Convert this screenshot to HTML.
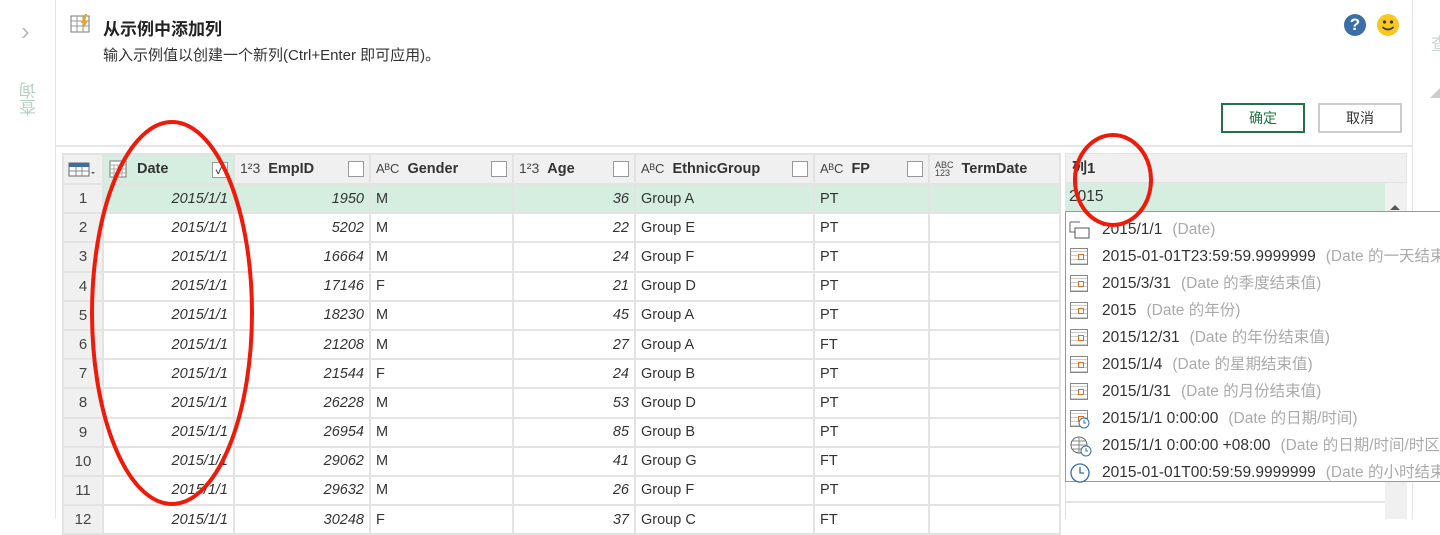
<!DOCTYPE html>
<html><head><meta charset="utf-8">
<style>
*{box-sizing:border-box;margin:0;padding:0}
body{width:1440px;height:519px;overflow:hidden;background:#fff;font-family:"Liberation Sans","Noto Sans CJK SC",sans-serif;color:#333;position:relative}
.abs{position:absolute}
#side{left:0;top:0;width:56px;height:519px;background:#fff;border-right:1px solid #e6e6e6}
#rside{left:1412px;top:0;width:28px;height:519px;border-left:1px solid #e6e6e6;background:#fff}
table{border-collapse:collapse;table-layout:fixed;position:absolute;left:62px;top:153px;font-size:14.5px}
td,th{border:2px solid #e3e3e3;height:29.2px;padding:0 5px;white-space:nowrap;overflow:hidden}
th{background:#f0f0f0;font-weight:bold;text-align:left;height:29px;line-height:27px;color:#333;vertical-align:middle}
td.n{background:#f0f0f0;text-align:center;color:#444;font-size:15px}
td.r{text-align:right;font-style:italic}
tr.sel td{background:#d5eee0}
tr.sel td.n{background:#f0f0f0}
.cb{display:inline-block;width:16px;height:16px;border:1px solid #999;background:#fff;float:right;margin-top:6px}
.ti{font-weight:normal;color:#444;font-size:12px;margin-right:8px}
.dd div{height:27px;line-height:27px;font-size:15.5px;color:#333;padding-left:36px;position:relative;white-space:nowrap}
.dd span{color:#aaa;margin-left:10px}
.ic{position:absolute;left:4px;top:5px;width:18px;height:17px;border:1px solid #888;background:repeating-linear-gradient(0deg,#ccc 0 1px,#fff 1px 4px),#fff}
.ic:after{content:"";position:absolute;right:3px;top:5px;width:4px;height:4px;border:1px solid #e07020;background:#fff}
</style></head><body>
<div class="abs" id="side">
 <div class="abs" style="left:21px;top:16px;font-size:26px;color:#bbb">&#8250;</div>
 <div class="abs" style="left:17px;top:82px;font-size:17px;color:#b8d0c4;writing-mode:vertical-rl;transform:rotate(180deg)">查询</div>
</div>
<div class="abs" id="rside">
 <div class="abs" style="left:18px;top:30px;font-size:17px;color:#c5d8cc">查</div>
 <div class="abs" style="left:17px;top:88px;width:0;height:0;border-left:10px solid transparent;border-bottom:10px solid #ccc"></div>
</div>

<svg class="abs" style="left:70px;top:14px" width="22" height="20"><rect x="1" y="2" width="18" height="16" fill="#fff" stroke="#777"/><path d="M1 7h18M1 12h18M7 2v16M13 2v16" stroke="#999"/><path d="M15 0l-4 9h3l-2 7 6-9h-3l2-7z" fill="#f0a020"/></svg>
<div class="abs" style="left:103px;top:15px;font-size:17px;font-weight:bold;color:#222">从示例中添加列</div>
<div class="abs" style="left:103px;top:44px;font-size:15px;color:#333">输入示例值以创建一个新列(Ctrl+Enter 即可应用)。</div>
<div class="abs" style="left:1344px;top:14px;width:22px;height:22px;border-radius:50%;background:#3a6ea8;color:#fff;font-weight:bold;font-size:17px;text-align:center;line-height:22px">?</div>
<svg class="abs" style="left:1376px;top:13px" width="24" height="24"><circle cx="12" cy="12" r="11" fill="#f8c820"/><circle cx="8.5" cy="9" r="1.6" fill="#333"/><circle cx="15.5" cy="9" r="1.6" fill="#333"/><path d="M6.5 14q5.5 5 11 0" stroke="#333" stroke-width="1.6" fill="none"/></svg>
<div class="abs" style="left:1221px;top:103px;width:84px;height:30px;border:2px solid #217346;text-align:center;line-height:26px;font-size:14px;color:#217346">确定</div>
<div class="abs" style="left:1318px;top:103px;width:84px;height:30px;border:2px solid #ccc;text-align:center;line-height:26px;font-size:14px;color:#333">取消</div>
<div class="abs" style="left:56px;top:145px;width:1356px;height:2px;background:#e6e6e6"></div>

<table>
<colgroup><col style="width:40px"><col style="width:131px"><col style="width:136px"><col style="width:143px"><col style="width:122px"><col style="width:179px"><col style="width:115px"><col style="width:131px"></colgroup>
<tr><th style="padding:0 4px"><svg width="28" height="16" style="vertical-align:middle"><rect x="1" y="2" width="20" height="13" fill="#fff" stroke="#666"/><rect x="1" y="2" width="20" height="4" fill="#3a6ea8"/><path d="M1 10h20M8 6v9M14 6v9" stroke="#888"/><path d="M23 11l2 2 2-2z" fill="#555"/></svg></th>
<th style="background:#d5eee0"><svg width="18" height="18" style="vertical-align:middle;margin-right:10px"><rect x="1" y="1" width="16" height="16" fill="#fff" stroke="#777"/><path d="M1 5h16M1 9h16M1 13h16M5 5v12M9 5v12M13 5v12" stroke="#aaa"/></svg>Date<span class="cb" style="text-align:center;line-height:13px;font-size:13px;font-weight:normal">✓</span></th>
<th><span class="ti" style="font-size:14px">1²3</span>EmpID<span class="cb"></span></th>
<th><span class="ti" style="font-size:13px">AᴮC</span>Gender<span class="cb"></span></th>
<th><span class="ti" style="font-size:14px">1²3</span>Age<span class="cb"></span></th>
<th><span class="ti" style="font-size:13px">AᴮC</span>EthnicGroup<span class="cb"></span></th>
<th><span class="ti" style="font-size:13px">AᴮC</span>FP<span class="cb"></span></th>
<th><span class="ti" style="font-size:9px;line-height:8px;display:inline-block;vertical-align:middle">ABC<br>123</span>TermDate</th></tr>
<tr class="sel"><td class="n">1</td><td class="r">2015/1/1</td><td class="r">1950</td><td>M</td><td class="r">36</td><td>Group A</td><td>PT</td><td></td></tr>
<tr><td class="n">2</td><td class="r">2015/1/1</td><td class="r">5202</td><td>M</td><td class="r">22</td><td>Group E</td><td>PT</td><td></td></tr>
<tr><td class="n">3</td><td class="r">2015/1/1</td><td class="r">16664</td><td>M</td><td class="r">24</td><td>Group F</td><td>PT</td><td></td></tr>
<tr><td class="n">4</td><td class="r">2015/1/1</td><td class="r">17146</td><td>F</td><td class="r">21</td><td>Group D</td><td>PT</td><td></td></tr>
<tr><td class="n">5</td><td class="r">2015/1/1</td><td class="r">18230</td><td>M</td><td class="r">45</td><td>Group A</td><td>PT</td><td></td></tr>
<tr><td class="n">6</td><td class="r">2015/1/1</td><td class="r">21208</td><td>M</td><td class="r">27</td><td>Group A</td><td>FT</td><td></td></tr>
<tr><td class="n">7</td><td class="r">2015/1/1</td><td class="r">21544</td><td>F</td><td class="r">24</td><td>Group B</td><td>PT</td><td></td></tr>
<tr><td class="n">8</td><td class="r">2015/1/1</td><td class="r">26228</td><td>M</td><td class="r">53</td><td>Group D</td><td>PT</td><td></td></tr>
<tr><td class="n">9</td><td class="r">2015/1/1</td><td class="r">26954</td><td>M</td><td class="r">85</td><td>Group B</td><td>PT</td><td></td></tr>
<tr><td class="n">10</td><td class="r">2015/1/1</td><td class="r">29062</td><td>M</td><td class="r">41</td><td>Group G</td><td>FT</td><td></td></tr>
<tr><td class="n">11</td><td class="r">2015/1/1</td><td class="r">29632</td><td>M</td><td class="r">26</td><td>Group F</td><td>PT</td><td></td></tr>
<tr><td class="n">12</td><td class="r">2015/1/1</td><td class="r">30248</td><td>F</td><td class="r">37</td><td>Group C</td><td>FT</td><td></td></tr>
</table>

<div class="abs" style="left:1065px;top:153px;width:342px;height:30px;background:#f0f0f0;border:1px solid #e3e3e3;font-weight:bold;font-size:15px;line-height:29px;padding-left:6px">列1</div>
<div class="abs" style="left:1065px;top:183px;width:320px;height:28px;background:#d5eee0;font-size:15.5px;line-height:28px;padding-left:4px">2015</div>
<div class="abs" style="left:1385px;top:183px;width:22px;height:336px;background:#f0f0f0"></div>
<div class="abs" style="left:1065px;top:211px;width:1px;height:308px;background:#ddd"></div>
<div class="abs" style="left:1065px;top:501px;width:320px;height:2px;background:#e3e3e3"></div>
<div class="abs" style="left:1390px;top:205px;width:0;height:0;border-left:5px solid transparent;border-right:5px solid transparent;border-bottom:5px solid #555"></div>
<div class="abs dd" style="left:1065px;top:211px;width:380px;height:271px;background:#fff;border:1px solid #999;padding-top:4px">
 <div><svg class="abs" style="left:3px;top:4px" width="22" height="20"><path d="M1 2h10M1 2v10h5" stroke="#666" fill="none"/><rect x="6" y="8" width="14" height="10" fill="#fff" stroke="#555"/></svg>2015/1/1<span>(Date)</span></div>
 <div><i class="ic"></i>2015-01-01T23:59:59.9999999<span>(Date 的一天结束值)</span></div>
 <div><i class="ic"></i>2015/3/31<span>(Date 的季度结束值)</span></div>
 <div><i class="ic"></i>2015<span>(Date 的年份)</span></div>
 <div><i class="ic"></i>2015/12/31<span>(Date 的年份结束值)</span></div>
 <div><i class="ic"></i>2015/1/4<span>(Date 的星期结束值)</span></div>
 <div><i class="ic"></i>2015/1/31<span>(Date 的月份结束值)</span></div>
 <div><i class="ic"></i><svg class="abs" style="left:12px;top:12px" width="12" height="12"><circle cx="6" cy="6" r="5" fill="#fff" stroke="#3a6ea8"/><path d="M6 3v3h2" stroke="#3a6ea8" fill="none"/></svg>2015/1/1 0:00:00<span>(Date 的日期/时间)</span></div>
 <div><svg class="abs" style="left:3px;top:3px" width="24" height="22"><circle cx="10" cy="10" r="8" fill="#fff" stroke="#666"/><path d="M2 10h16M10 2v16M4 6h12M4 14h12" stroke="#888" fill="none"/><circle cx="17" cy="16" r="5" fill="#fff" stroke="#3a6ea8"/><path d="M17 13v3h2" stroke="#3a6ea8" fill="none"/></svg>2015/1/1 0:00:00 +08:00<span>(Date 的日期/时间/时区)</span></div>
 <div><svg class="abs" style="left:3px;top:3px" width="22" height="22"><circle cx="11" cy="11" r="9" fill="#fff" stroke="#3a6ea8" stroke-width="1.3"/><path d="M11 5v6h4" stroke="#3a6ea8" stroke-width="1.3" fill="none"/></svg>2015-01-01T00:59:59.9999999<span>(Date 的小时结束值)</span></div>
</div>

<svg class="abs" style="left:0;top:0" width="1440" height="519">
<ellipse cx="172" cy="313" rx="80" ry="191" fill="none" stroke="#f01a0a" stroke-width="4"/>
<ellipse cx="1113" cy="180" rx="38" ry="45" fill="none" stroke="#f01a0a" stroke-width="4"/>
</svg>
</body></html>
